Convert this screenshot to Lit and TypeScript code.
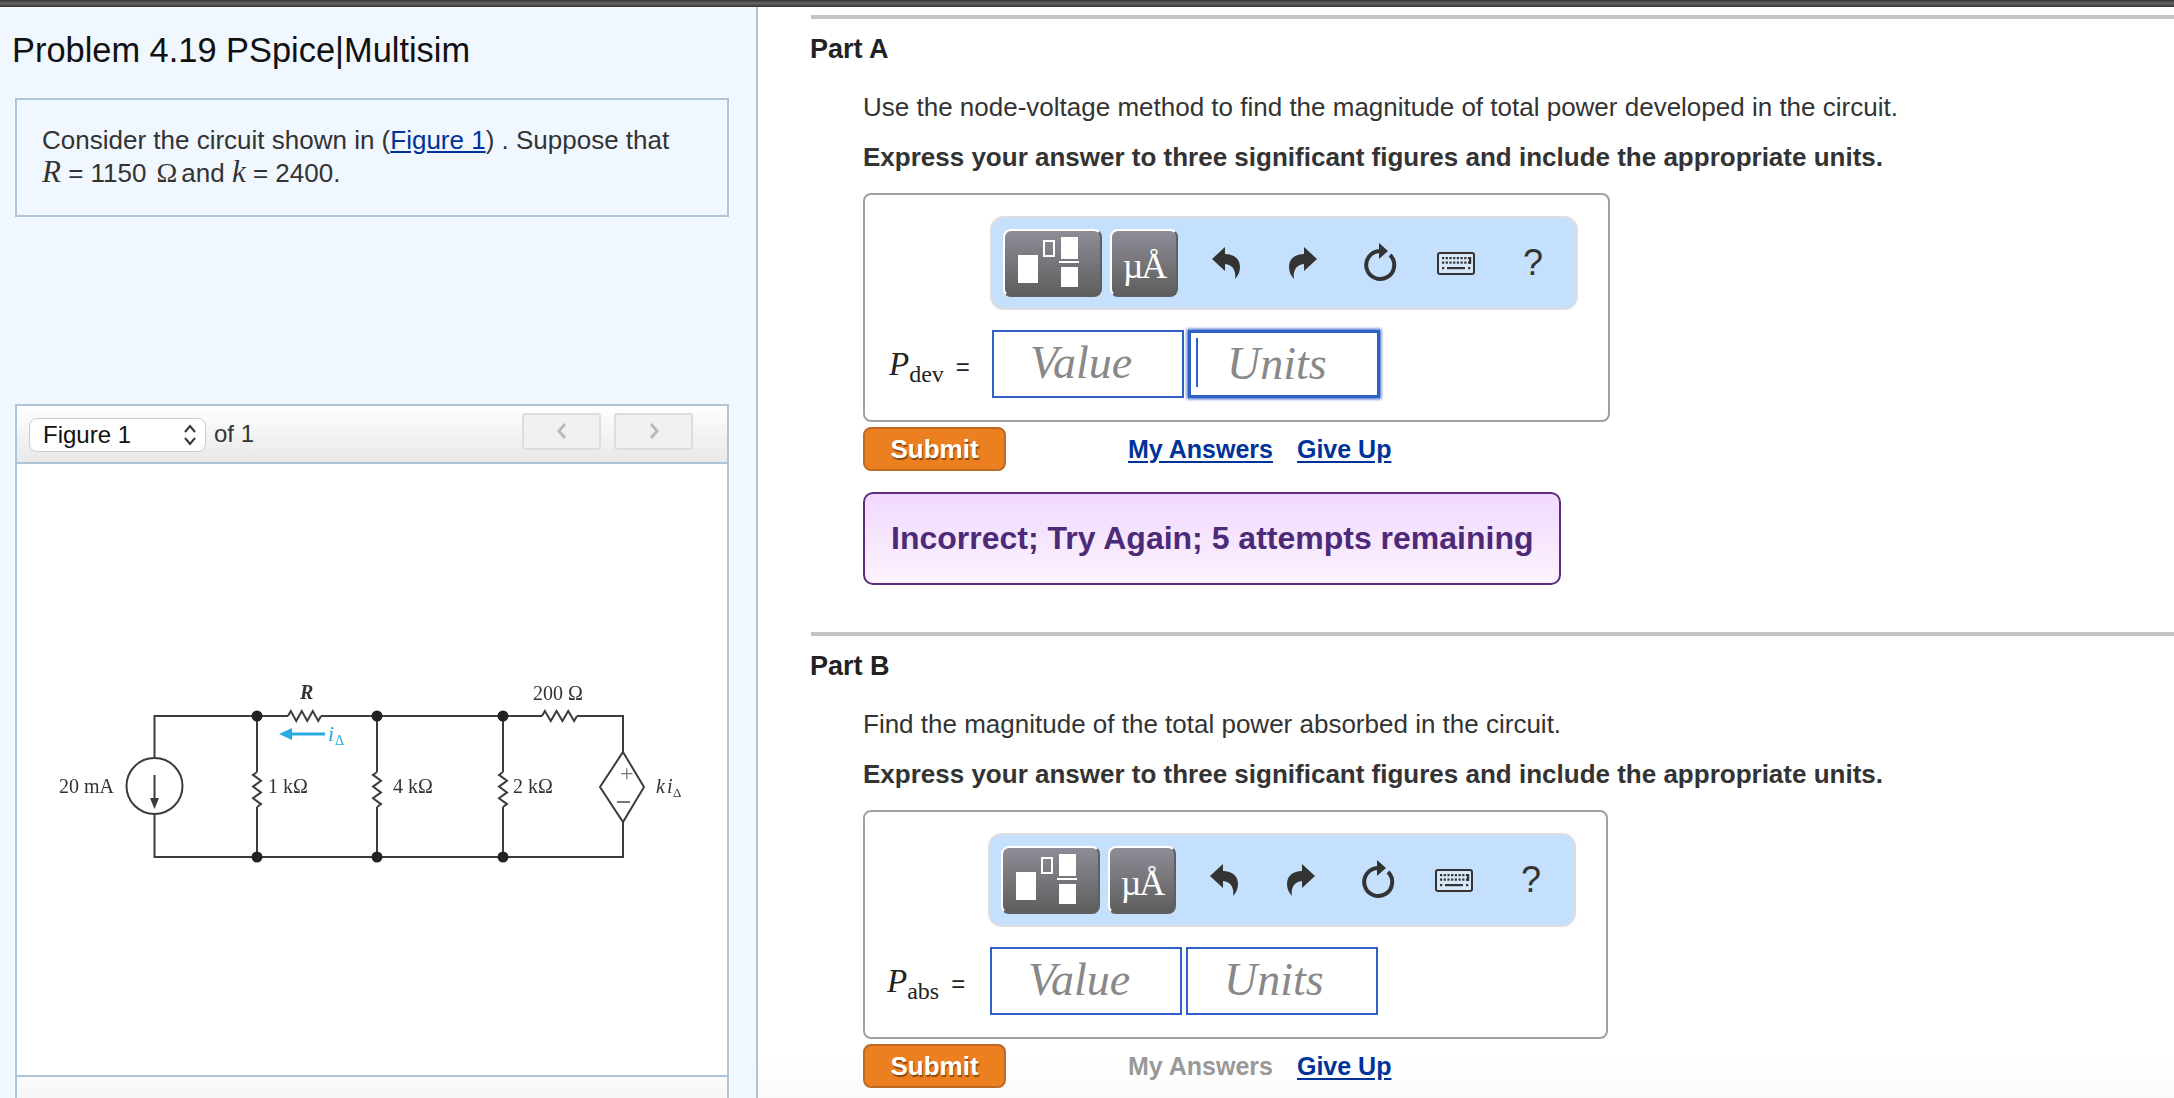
import { LitElement, css, html, svg } from "lit";
import { customElement, property } from "lit/decorators.js";

// zigzag between two points, used for every resistor in the figure
function zigzag(x1: number, y1: number, x2: number, y2: number, teeth: number, amp: number) {
  const pts: string[] = [`${x1} ${y1}`];
  const horizontal = y1 === y2;
  for (let i = 0; i < teeth; i++) {
    const t = (i + 0.5) / teeth;
    const side = i % 2 === 0 ? -amp : amp;
    const x = x1 + (x2 - x1) * t + (horizontal ? 0 : side);
    const y = y1 + (y2 - y1) * t + (horizontal ? side : 0);
    pts.push(`${x} ${y}`);
  }
  pts.push(`${x2} ${y2}`);
  return pts.join(" L");
}

@customElement("circuit-figure")
export class CircuitFigure extends LitElement {
  static override styles = css`
    :host {
      display: block;
    }
    svg {
      display: block;
      width: 710px;
      height: 611px;
      filter: blur(0.45px);
    }
    .wire {
      fill: none;
      stroke: #3c3c3c;
      stroke-width: 2px;
    }
    .label {
      font-family: "Liberation Serif", serif;
      font-size: 20px;
      fill: #333;
    }
    .bold {
      font-weight: bold;
    }
    .blue {
      fill: #29abe2;
      font-style: italic;
    }
    .italic {
      font-style: italic;
    }
  `;

  override render() {
    const nodes = [257, 377, 503];
    return html`
      <svg viewBox="17 464 710 611">
        <path class="wire" d="M154.5 758V716H288M321 716H542M577 716H623V752M623 822V857H154.5V814" />
        <path class="wire" d="M${zigzag(288, 716, 321, 716, 6, 5)}" />
        <path class="wire" d="M${zigzag(542, 716, 577, 716, 6, 5)}" />
        ${nodes.map(
          (x) => svg`
            <path class="wire" d="M${x} 716V772M${x} 807V857" />
            <path class="wire" d="M${zigzag(x, 772, x, 807, 6, 4)}" />
            <circle cx=${x} cy="716" r="5.5" fill="#222" />
            <circle cx=${x} cy="857" r="5.5" fill="#222" />
          `
        )}
        <circle class="wire" cx="154.5" cy="786" r="28" />
        <path class="wire" d="M154.5 775V802" />
        <path d="M150 798H159L154.5 809Z" fill="#3c3c3c" />
        <path class="wire" d="M623 752L644 787L623 822L600 787Z" />
        <text class="label" x="620" y="781" style="font-size:24px;fill:#777">+</text>
        <path d="M617 802H630" stroke="#777" stroke-width="2" />
        <path d="M289 734H325" stroke="#29abe2" stroke-width="3" />
        <path d="M279 734L292 728V740Z" fill="#29abe2" />
        <text class="label blue" x="328" y="741" style="font-size:22px">i</text>
        <text class="label blue" x="335" y="745" style="font-size:14px;font-style:normal">Δ</text>
        <text class="label bold italic" x="300" y="699">R</text>
        <text class="label" x="533" y="700">200 Ω</text>
        <text class="label" x="59" y="793">20 mA</text>
        <text class="label" x="268" y="793">1 kΩ</text>
        <text class="label" x="393" y="793">4 kΩ</text>
        <text class="label" x="513" y="793">2 kΩ</text>
        <text class="label italic" x="656" y="793">k<tspan dx="2">i</tspan></text>
        <text class="label" x="673" y="797" style="font-size:13px">Δ</text>
      </svg>
    `;
  }
}

@customElement("answer-part")
export class AnswerPart extends LitElement {
  @property() label = "";
  @property() prompt = "";
  @property() symbol = "";
  @property({ type: Boolean }) focused = false;
  @property({ type: Boolean }) narrow = false;
  @property({ type: Boolean }) answersDisabled = false;

  static override styles = css`
    :host {
      display: block;
      font-family: "Liberation Sans", Arial, sans-serif;
      color: #222;
    }
    .rule {
      height: 4px;
      background: #c4c4c4;
    }
    h2 {
      margin: 14px 0 0 -1px;
      font-size: 27px;
      line-height: 32px;
      font-weight: bold;
    }
    .body {
      margin-left: 52px;
    }
    .prompt {
      margin: 26px 0 0;
      font-size: 26px;
      line-height: 32px;
      color: #333;
    }
    .hint {
      margin: 18px 0 0;
      font-size: 26px;
      line-height: 32px;
      font-weight: bold;
      color: #333;
    }
    .box {
      box-sizing: border-box;
      margin-top: 20px;
      width: 747px;
      height: 229px;
      padding: 21px 0 0 24px;
      border: 2px solid #a0a0a0;
      border-radius: 8px;
      background: #fff;
    }
    .narrow .box {
      width: 745px;
      padding-left: 22px;
    }
    .toolbar {
      box-sizing: border-box;
      display: flex;
      align-items: center;
      width: 588px;
      height: 94px;
      margin-left: 101px;
      padding-left: 11px;
      background: #c5e0fd;
      border: 2px solid #ddd;
      border-radius: 14px;
    }
    .palette {
      box-sizing: border-box;
      height: 68px;
      border-radius: 8px;
      border: 2px solid;
      border-color: #fff #5f5f5f #5f5f5f #fff;
      background: linear-gradient(#8e8c96, #5e5e5e);
    }
    .templates {
      width: 99px;
      margin-right: 8px;
    }
    .templates svg {
      display: block;
    }
    .units {
      width: 68px;
      margin-right: 10px;
      color: #fff;
      font-family: "Liberation Serif", serif;
      font-size: 36px;
      letter-spacing: -2px;
      text-align: center;
      line-height: 70px;
    }
    .tool {
      width: 76.7px;
      display: flex;
      justify-content: center;
      align-items: center;
    }
    .help {
      font-size: 36px;
      color: #333;
    }
    .row {
      display: flex;
      align-items: center;
      margin-top: 20px;
    }
    .symbol {
      width: 103px;
      font-family: "Liberation Serif", serif;
      display: flex;
      align-items: baseline;
      flex: none;
    }
    .symbol i {
      font-size: 33px;
      color: #222;
    }
    .symbol sub {
      font-size: 24px;
      vertical-align: baseline;
      position: relative;
      top: 7px;
    }
    .symbol span {
      font-family: "Liberation Sans", sans-serif;
      font-size: 24px;
      margin-left: 12px;
    }
    .input {
      box-sizing: border-box;
      position: relative;
      width: 192px;
      height: 68px;
      margin-right: 4px;
      padding-left: 36px;
      border: 2px solid #2f5fc9;
      font-family: "Liberation Serif", serif;
      font-style: italic;
      font-size: 46px;
      line-height: 62px;
      color: #888;
    }
    .focus {
      box-shadow: 0 0 3px 1px #2f5fc9;
      border-width: 3px;
    }
    .caret {
      position: absolute;
      left: 5px;
      top: 5px;
      width: 2px;
      height: 49px;
      background: #2f5fc9;
    }
    .actions {
      display: flex;
      align-items: center;
      margin-top: 5px;
    }
    .submit {
      box-sizing: border-box;
      width: 143px;
      height: 44px;
      border: 2px solid #bf6a22;
      border-radius: 8px;
      background: #ec7f1f;
      color: #fff;
      font-family: inherit;
      font-size: 26px;
      font-weight: bold;
      padding: 0;
      text-shadow: 1px 2px 1px #8a4a10;
    }
    .link {
      font-size: 25px;
      font-weight: bold;
      color: #003399;
      text-decoration: underline;
      text-underline-offset: 3px;
    }
    .answers {
      margin-left: 122px;
      margin-right: 24px;
    }
    .off {
      color: #999;
      text-decoration: none;
    }
  `;

  private renderToolbar() {
    const keys = [0, 1, 2, 3, 4, 5, 6, 7];
    return html`
      <div class="toolbar">
        <div class="palette templates">
          <svg width="95" height="64" viewBox="0 0 95 64">
            <rect x="13" y="24" width="20" height="28" fill="#fff" />
            <rect x="39" y="10" width="10" height="15" fill="none" stroke="#fff" stroke-width="2" />
            <rect x="56" y="6" width="17" height="22" fill="#fff" />
            <rect x="54" y="30" width="20" height="2" fill="#fff" />
            <rect x="56" y="36" width="17" height="20" fill="#fff" />
          </svg>
        </div>
        <div class="palette units">µÅ</div>
        <div class="tool">
          <svg width="28" height="33" viewBox="0 0 28 33">
            <path d="M0 12L13 0V7C22 7 28 12 28 20C28 25 26 29 23 32C24 27 23 18 13 17V24Z" fill="#333" />
          </svg>
        </div>
        <div class="tool">
          <svg width="28" height="33" viewBox="0 0 28 33">
            <path d="M28 12L15 0V7C6 7 0 12 0 20C0 25 2 29 5 32C4 27 5 18 15 17V24Z" fill="#333" />
          </svg>
        </div>
        <div class="tool">
          <svg width="36" height="40" viewBox="0 0 36 40">
            <path d="M18 8A14 14 0 1 0 28 12" fill="none" stroke="#333" stroke-width="4" />
            <path d="M17 0L26 8L17 16Z" fill="#333" />
          </svg>
        </div>
        <div class="tool">
          <svg width="38" height="23" viewBox="0 0 38 23">
            <rect x="1" y="1" width="36" height="21" rx="2" fill="#d8e8f8" stroke="#333" stroke-width="2" />
            ${keys.map((i) => svg`<rect x=${5 + i * 3.7} y="5" width="2.2" height="2.2" fill="#333" />`)}
            ${keys.map((i) => svg`<rect x=${5 + i * 3.7} y="9.5" width="2.2" height="2.2" fill="#333" />`)}
            <rect x="32" y="5" width="2.2" height="7" fill="#333" />
            <rect x="5" y="15" width="2.2" height="2.2" fill="#333" />
            <rect x="10" y="15" width="18" height="2.2" fill="#333" />
            <rect x="31" y="15" width="2.2" height="2.2" fill="#333" />
          </svg>
        </div>
        <div class="tool help">?</div>
      </div>
    `;
  }

  override render() {
    return html`
      <div class="rule"></div>
      <h2>${this.label}</h2>
      <div class="body ${this.narrow ? "narrow" : ""}">
        <p class="prompt">${this.prompt}</p>
        <p class="hint">Express your answer to three significant figures and include the appropriate units.</p>
        <div class="box">
          ${this.renderToolbar()}
          <div class="row">
            <div class="symbol"><i>P</i><sub>${this.symbol}</sub><span>=</span></div>
            <div class="input">Value</div>
            <div class="input ${this.focused ? "focus" : ""}">
              ${this.focused ? html`<div class="caret"></div>` : ""}Units
            </div>
          </div>
        </div>
        <div class="actions">
          <button class="submit">Submit</button>
          <span class="link answers ${this.answersDisabled ? "off" : ""}">My Answers</span>
          <span class="link">Give Up</span>
        </div>
        <slot></slot>
      </div>
    `;
  }
}

@customElement("app-root")
export class AppRoot extends LitElement {
  static override styles = css`
    :host {
      display: block;
      height: 1098px;
      overflow: hidden;
      font-family: "Liberation Sans", Arial, sans-serif;
      background: linear-gradient(#fff 1060px, #fafafa);
    }
    .topbar {
      height: 7px;
      background: linear-gradient(#333, #666 45%, #333);
    }
    .page {
      display: flex;
      height: 1091px;
    }
    .left {
      box-sizing: border-box;
      width: 758px;
      flex: none;
      padding-left: 12px;
      border-right: 2px solid #b0c4d8;
      background: #f0f7ff;
      overflow: hidden;
    }
    h1 {
      margin: 23px 0 0;
      font-size: 34.4px;
      line-height: 40px;
      font-weight: normal;
      color: #111;
    }
    .intro {
      box-sizing: border-box;
      width: 714px;
      height: 119px;
      margin: 28px 0 0 3px;
      padding: 25px 0 0 25px;
      border: 2px solid #b0c4d8;
      font-size: 26px;
      line-height: 31px;
      color: #333;
    }
    .intro a {
      color: #003399;
      text-decoration: underline;
    }
    .intro i {
      font-family: "Liberation Serif", serif;
      font-size: 31px;
    }
    .omega {
      font-family: "Liberation Serif", serif;
      font-size: 28px;
      margin: 0 4px 0 10px;
    }
    .figure {
      width: 714px;
      box-sizing: border-box;
      margin: 187px 0 0 3px;
      border: 2px solid #b0c4d8;
      border-bottom: none;
    }
    .figbar {
      box-sizing: border-box;
      display: flex;
      align-items: center;
      height: 58px;
      padding-left: 12px;
      border-bottom: 2px solid #b0c4d8;
      background: linear-gradient(#fff, #e8e8e8);
      font-size: 24px;
      color: #333;
    }
    .select {
      box-sizing: border-box;
      display: flex;
      align-items: center;
      justify-content: space-between;
      width: 177px;
      height: 34px;
      padding: 0 8px 0 13px;
      margin-top: 2px;
      background: #fff;
      border: 1px solid #ccc;
      border-radius: 8px;
      color: #111;
    }
    .of {
      margin: 0 0 0 8px;
    }
    .nav {
      box-sizing: border-box;
      display: flex;
      align-items: center;
      justify-content: center;
      width: 79px;
      height: 37px;
      margin-top: -6px;
      border: 2px solid #ddd;
      border-radius: 3px;
      background: #f1f1f1;
    }
    .prev {
      margin-left: auto;
    }
    .next {
      margin: -6px 34px 0 13px;
    }
    .stage {
      background: #fff;
      height: 611px;
    }
    .figfoot {
      height: 60px;
      border-top: 2px solid #b0c4d8;
      background: linear-gradient(#fafafa, #efefef);
    }
    .right {
      flex: 1;
      padding: 8px 0 0 53px;
      min-width: 0;
    }
    .banner {
      box-sizing: border-box;
      width: 698px;
      height: 93px;
      margin-top: 21px;
      padding-left: 26px;
      border: 2px solid #5a2d7f;
      border-radius: 10px;
      background: linear-gradient(#f0d8fe, #fdf3fe);
      color: #4d2a78;
      font-size: 32px;
      font-weight: bold;
      line-height: 89px;
    }
    .second {
      margin-top: 47px;
    }
  `;

  override render() {
    return html`
      <div class="topbar"></div>
      <div class="page">
        <section class="left">
          <h1>Problem 4.19 PSpice|Multisim</h1>
          <div class="intro">
            Consider the circuit shown in (<a>Figure 1</a>) . Suppose that<br />
            <i>R</i> = 1150<span class="omega">Ω</span>and <i>k</i> = 2400.
          </div>
          <div class="figure">
            <div class="figbar">
              <div class="select">
                Figure 1
                <svg width="14" height="22" viewBox="0 0 14 22">
                  <path d="M2 8L7 2L12 8M2 14L7 20L12 14" fill="none" stroke="#333" stroke-width="2" />
                </svg>
              </div>
              <span class="of">of 1</span>
              <div class="nav prev">
                <svg width="12" height="18" viewBox="0 0 12 18">
                  <path d="M9 2L3 9L9 16" fill="none" stroke="#bbb" stroke-width="3" />
                </svg>
              </div>
              <div class="nav next">
                <svg width="12" height="18" viewBox="0 0 12 18">
                  <path d="M3 2L9 9L3 16" fill="none" stroke="#bbb" stroke-width="3" />
                </svg>
              </div>
            </div>
            <div class="stage"><circuit-figure></circuit-figure></div>
            <div class="figfoot"></div>
          </div>
        </section>
        <section class="right">
          <answer-part
            label="Part A"
            prompt="Use the node-voltage method to find the magnitude of total power developed in the circuit."
            symbol="dev"
            focused
          >
            <div class="banner">Incorrect; Try Again; 5 attempts remaining</div>
          </answer-part>
          <answer-part
            class="second"
            style="margin-top:47px"
            label="Part B"
            prompt="Find the magnitude of the total power absorbed in the circuit."
            symbol="abs"
            narrow
            answersDisabled
          ></answer-part>
        </section>
      </div>
    `;
  }
}
